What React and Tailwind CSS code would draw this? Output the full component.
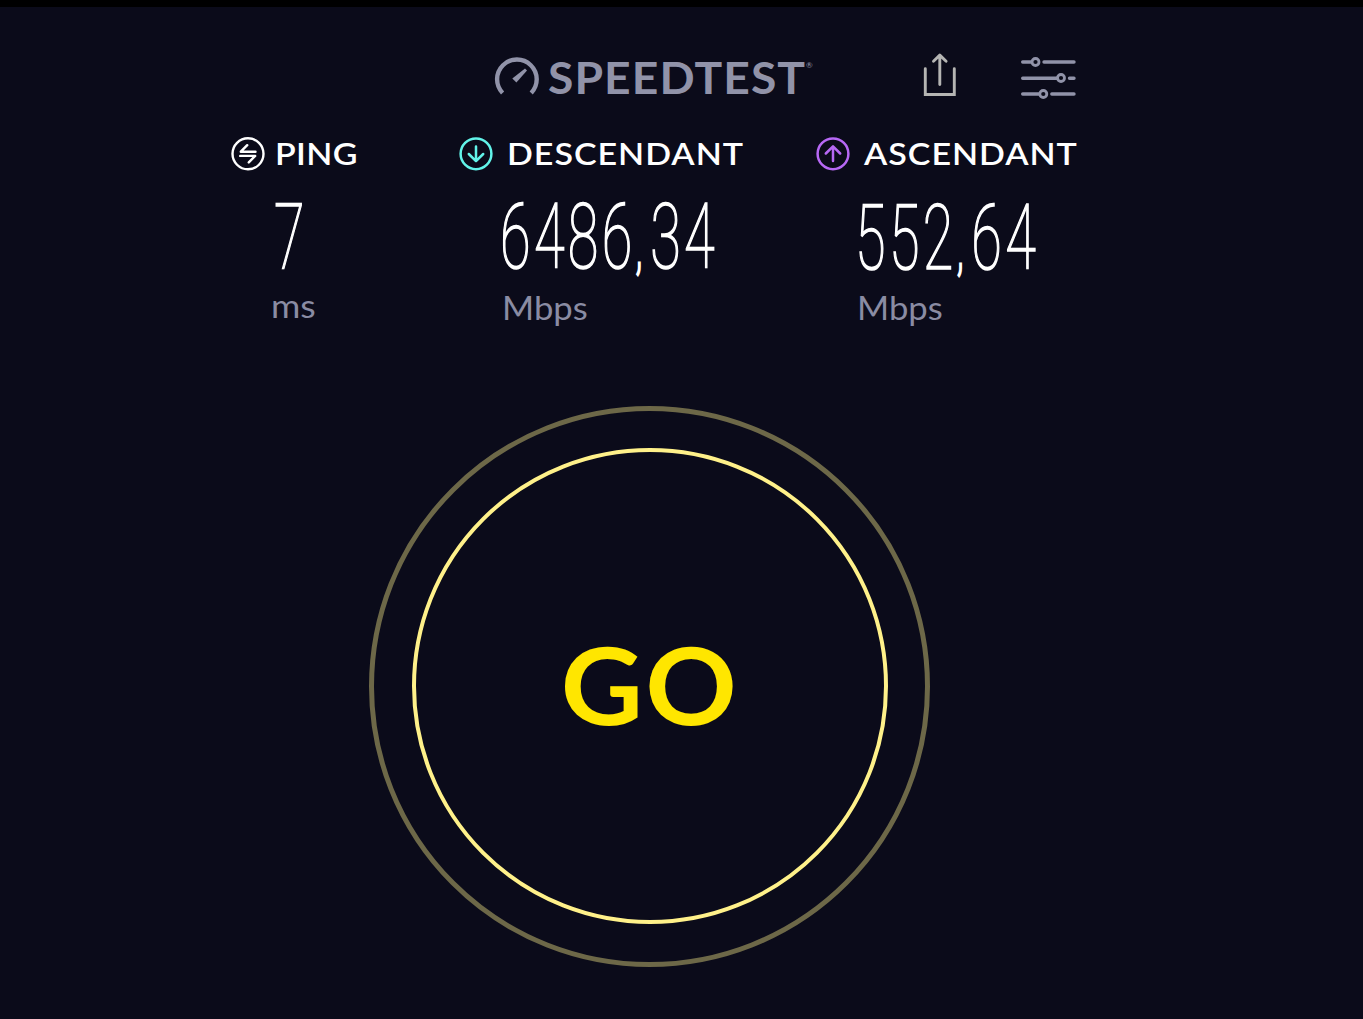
import React from 'react';

const metrics = [
  {
    id: 'ping',
    label: 'PING',
    value: '7',
    unit: 'ms',
    column: 'w-[228px]',
    gap: 'ml-[10px]',
    labelStyle: 'tracking-[0.3px]',
    valueStyle: 'ml-[43px] mt-[22px]',
    unitStyle: 'ml-[40px] mt-[5px]',
    unitScale: 'scale-x-[1.08]',
    icon: <PingIcon />,
  },
  {
    id: 'download',
    label: 'DESCENDANT',
    value: '6486,34',
    unit: 'Mbps',
    column: 'w-[357px]',
    gap: 'ml-[13.5px]',
    labelStyle: 'tracking-[0.9px]',
    valueStyle: 'ml-[41px] mt-[22px]',
    unitStyle: 'ml-[43px] mt-[7px]',
    unitScale: 'scale-x-[1.05]',
    icon: <ArrowIcon color="#62f3e9" />,
  },
  {
    id: 'upload',
    label: 'ASCENDANT',
    value: '552,64',
    unit: 'Mbps',
    column: 'w-[300px]',
    gap: 'ml-[14px]',
    labelStyle: 'tracking-[0.9px]',
    valueStyle: 'ml-[39px] mt-[23px]',
    unitStyle: 'ml-[41px] mt-[6px]',
    unitScale: 'scale-x-[1.05]',
    icon: <ArrowIcon color="#b768f5" up />,
  },
];

function PingIcon() {
  return (
    <svg width="34" height="34" viewBox="0 0 34 34" fill="none" stroke="#fff" strokeWidth="2.4" className="shrink-0">
      <circle cx="17" cy="16.8" r="15.5" />
      <path d="M24.5 14.7H9.8L16.2 8.2M9.2 18.9H24.2L17.8 25.4" strokeLinejoin="round" strokeLinecap="round" />
    </svg>
  );
}

function ArrowIcon({ color, up }) {
  return (
    <svg width="34" height="34" viewBox="0 0 34 34" fill="none" stroke={color} strokeWidth="2.5" className="shrink-0">
      <circle cx="17" cy="16.8" r="15.4" />
      <path
        d={up ? 'M17 24V9.5M9.8 16.5L17 9.3L24.2 16.5' : 'M17 9.5V24M9.8 17L17 24.2L24.2 17'}
        strokeLinejoin="round"
        strokeLinecap="round"
      />
    </svg>
  );
}

function Logo() {
  return (
    <div className="flex items-start w-[426px] text-[#9193a9]">
      <svg width="46" height="40" viewBox="0 0 46 40" fill="none" className="shrink-0 mt-[1px]">
        <path d="M8.6 36A19.8 19.8 0 1 1 37.2 36" stroke="currentColor" strokeWidth="4.4" />
        <path d="M31 11.6L33 13.6L22.4 25.6L18.3 21.6Z" fill="currentColor" />
      </svg>
      <span className="ml-[8px] w-[265px]">
        <span className="inline-block origin-left scale-x-[1.075] whitespace-nowrap text-[43px] leading-none font-bold tracking-[1px]">
          SPEEDTEST
        </span>
      </span>
      <span className="-ml-[7px] mt-[5px] text-[8px] leading-none">®</span>
    </div>
  );
}

function ShareIcon() {
  return (
    <svg width="36" height="46" viewBox="0 0 36 46" fill="none" stroke="#b5b5b3" strokeWidth="2.9" className="shrink-0">
      <path d="M3.3 15.8V41.5H32.3V15.8" strokeLinecap="round" />
      <path d="M17.8 31.5V2.5M11.5 8.2L17.8 2.1L24.1 8.2" strokeLinecap="round" strokeLinejoin="round" />
    </svg>
  );
}

function SettingsIcon() {
  return (
    <svg width="56" height="44" viewBox="0 0 56 44" fill="none" stroke="#9193a9" className="shrink-0">
      <g strokeWidth="3.4" strokeLinecap="round">
        <path d="M2.7 6H11.5M24 6H54M2.7 22.2H37.5M49.5 22.2H54M2.7 38H18.5M31.8 38H54" />
      </g>
      <g strokeWidth="2.8">
        <circle cx="15.5" cy="6" r="3.5" />
        <circle cx="41" cy="22" r="3.5" />
        <circle cx="23.3" cy="38" r="3.5" />
      </g>
    </svg>
  );
}

function Metric({ metric }) {
  const [whole, decimals] = metric.value.split(',');

  return (
    <div className={`shrink-0 ${metric.column}`}>
      <div className="flex items-start h-[34px]">
        {metric.icon}
        <span
          className={`inline-block origin-left scale-x-[1.08] text-[31.5px] leading-none font-semibold text-white pt-px ${metric.gap} ${metric.labelStyle}`}
        >
          {metric.label}
        </span>
      </div>
      <div className={`h-[91px] ${metric.valueStyle}`}>
        <span className="inline-block origin-left scale-x-[0.62] whitespace-nowrap font-['Roboto'] font-thin text-[90px] leading-none tracking-[5.4px] text-white [-webkit-text-stroke:1.7px_#fff]">
          {whole}
          {decimals && (
            <>
              <span className="mr-[7px] text-[60px] leading-none [-webkit-text-stroke:3px_#fff]">,</span>
              {decimals}
            </>
          )}
        </span>
      </div>
      <div className={`text-[33px] leading-none text-[#8a8ca3] ${metric.unitStyle}`}>
        <span className={`inline-block origin-left ${metric.unitScale}`}>{metric.unit}</span>
      </div>
    </div>
  );
}

export default function App() {
  return (
    <div className="h-[1019px] w-[1363px] overflow-hidden border-t-[7px] border-black bg-[#0b0b1a] font-['Lato',sans-serif]">
      <header className="flex items-start pl-[494px] pt-[46px] h-[130px]">
        <div className="mt-[3px]">
          <Logo />
        </div>
        <button className="ml-[2px]">
          <ShareIcon />
        </button>
        <button className="ml-[62px] mt-[3px]">
          <SettingsIcon />
        </button>
      </header>

      <section className="flex pl-[231px] h-[269px]">
        {metrics.map((metric) => (
          <Metric key={metric.id} metric={metric} />
        ))}
      </section>

      <button className="ml-[369px] flex size-[561px] items-center justify-center rounded-full border-[5px] border-[#6d6848]">
        <span className="mb-px flex size-[476px] items-center justify-center rounded-full border-[4px] border-[#fff18a]">
          <span className="mb-[7px] scale-x-[1.05] text-[108px] leading-none font-bold tracking-[2px] text-[#ffe600]">GO</span>
        </span>
      </button>
    </div>
  );
}
